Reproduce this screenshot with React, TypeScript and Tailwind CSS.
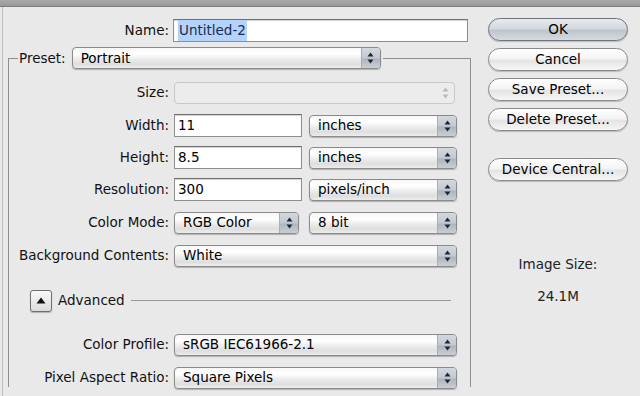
import React from "react";

const font = "font-['Lucida_Grande','DejaVu_Sans',sans-serif]";

function Arrows({ dim }: { dim?: boolean }) {
  const c = dim ? "#b9b9b9" : "#1e2633";
  return (
    <svg width="7" height="12" viewBox="0 0 7 12">
      <polygon points="3.5,0.5 6.5,4.5 0.5,4.5" fill={c} />
      <polygon points="0.5,7.5 6.5,7.5 3.5,11.5" fill={c} />
    </svg>
  );
}

function Select({
  value,
  className,
  disabled,
}: {
  value: string;
  className: string;
  disabled?: boolean;
}) {
  if (disabled) {
    return (
      <div
        className={`flex h-[22px] items-stretch rounded-[4px] border border-[#c9c9c9] bg-[#ececec] ${className}`}
      >
        <div className="flex-1" />
        <div className="flex w-[18px] items-center justify-center">
          <Arrows dim />
        </div>
      </div>
    );
  }
  return (
    <div
      className={`flex h-[22px] items-stretch overflow-hidden rounded-[4px] border border-[#8b8b8b] bg-[linear-gradient(to_bottom,#f7f7f7_0%,#ffffff_30%,#ececec_55%,#dedede_80%,#ededed_100%)] shadow-[0_1px_1px_rgba(0,0,0,0.25)] ${className}`}
    >
      <div className="flex flex-1 items-center pl-[8px] text-[13.5px] text-black">{value}</div>
      <div className="flex w-[19px] items-center justify-center border-l border-[#a9adb5] bg-[linear-gradient(to_bottom,#d3d8df_0%,#c3c9d2_50%,#aeb5c0_55%,#c9ced6_100%)]">
        <Arrows />
      </div>
    </div>
  );
}

function TextInput({ value, className }: { value: string; className: string }) {
  return (
    <div
      className={`flex h-[23px] items-center border border-[#8f8f8f] border-t-[#6f6f6f] bg-white pl-[3px] text-[13.5px] text-black shadow-[inset_0_1px_1px_rgba(0,0,0,0.18)] ${className}`}
    >
      {value}
    </div>
  );
}

function PillButton({ label, primary }: { label: string; primary?: boolean }) {
  return (
    <div
      className={`flex h-[23px] w-[140px] items-center justify-center rounded-full border text-[13.5px] text-black shadow-[0_1px_1px_rgba(0,0,0,0.2)] ${
        primary
          ? "border-[#6f747c] bg-[linear-gradient(to_bottom,#e7eaee_0%,#d4d9df_45%,#bfc5cd_55%,#d6dbe1_100%)]"
          : "border-[#8a8a8a] bg-[linear-gradient(to_bottom,#ffffff_0%,#f4f4f4_45%,#e4e4e4_55%,#f6f6f6_100%)]"
      }`}
    >
      {label}
    </div>
  );
}

function Row({
  label,
  className,
  children,
}: {
  label: string;
  className: string;
  children: React.ReactNode;
}) {
  return (
    <div className={`flex h-[23px] items-center ${className}`}>
      <div className="w-[164px] pr-[4px] text-right text-[13.5px] text-[#111]">{label}</div>
      <div className="ml-[1px] flex items-center gap-[7px]">{children}</div>
    </div>
  );
}

export default function App() {
  return (
    <div className={`h-[396px] w-[640px] overflow-hidden bg-[#e9e9e9] ${font}`}>
      {/* title bar strip */}
      <div className="h-[7px] border-b border-[#7d7d7d] bg-[linear-gradient(to_bottom,#a9a9a9,#999999)]" />

      <div className="ml-[2px] flex h-[389px] border-l border-[#bdbdbd]">
        {/* left column */}
        <div className="w-[478px] shrink-0">
          <div className="mt-[12px] flex h-[23px] items-center">
            <div className="w-[170px] pr-[4px] text-right text-[13.5px] text-[#111]">Name:</div>
            <TextInput className="w-[295px]" value="" />
          </div>
          {/* selected name text on the input */}
          <div className="-mt-[23px] ml-[175px] flex h-[23px] items-center">
            <span className="bg-[#b4d3fa] px-[1px] text-[13.5px] text-[#1b2a55]">Untitled-2</span>
          </div>

          <fieldset className="mt-[5px] ml-[5px] h-[340px] w-[463px] border border-b-0 border-[#8e8e8e]">
            <legend className="ml-[9px] flex items-center gap-[6px] pr-[2px]">
              <span className="pl-[1px] text-[13.5px] text-[#111]">Preset:</span>
              <Select value="Portrait" className="w-[309px]" />
            </legend>

            <Row label="Size:" className="mt-[12px] text-[#8a8a8a]">
              <Select value="" disabled className="w-[281px]" />
            </Row>
            <Row label="Width:" className="mt-[10px]">
              <TextInput value="11" className="w-[128px]" />
              <Select value="inches" className="w-[148px]" />
            </Row>
            <Row label="Height:" className="mt-[9px]">
              <TextInput value="8.5" className="w-[128px]" />
              <Select value="inches" className="w-[148px]" />
            </Row>
            <Row label="Resolution:" className="mt-[9px]">
              <TextInput value="300" className="w-[128px]" />
              <Select value="pixels/inch" className="w-[148px]" />
            </Row>
            <Row label="Color Mode:" className="mt-[10px]">
              <Select value="RGB Color" className="w-[125px]" />
              <div className="ml-[3px]">
                <Select value="8 bit" className="w-[148px]" />
              </div>
            </Row>
            <Row label="Background Contents:" className="mt-[10px]">
              <Select value="White" className="w-[283px]" />
            </Row>

            <div className="mt-[22px] flex h-[23px] items-center pl-[21px]">
              <div className="flex h-[22px] w-[22px] items-center justify-center rounded-[3px] border border-[#6e6e6e] bg-[linear-gradient(to_bottom,#fafafa,#dcdcdc)] shadow-[0_1px_1px_rgba(0,0,0,0.25)]">
                <svg width="10" height="7" viewBox="0 0 10 7">
                  <polygon points="5,0.5 9.5,6.5 0.5,6.5" fill="#111" />
                </svg>
              </div>
              <span className="ml-[6px] text-[13.5px] text-[#111]">Advanced</span>
              <div className="ml-[6px] h-px w-[320px] bg-[#9a9a9a]" />
            </div>

            <Row label="Color Profile:" className="mt-[21px]">
              <Select value="sRGB IEC61966-2.1" className="w-[283px]" />
            </Row>
            <Row label="Pixel Aspect Ratio:" className="mt-[10px]">
              <Select value="Square Pixels" className="w-[283px]" />
            </Row>
          </fieldset>
        </div>

        {/* right column */}
        <div className="ml-[7px] flex w-[140px] flex-col">
          <div className="mt-[11px] flex flex-col gap-[7px]">
            <PillButton label="OK" primary />
            <PillButton label="Cancel" />
            <PillButton label="Save Preset..." />
            <PillButton label="Delete Preset..." />
          </div>
          <div className="mt-[27px]">
            <PillButton label="Device Central..." />
          </div>
          <div className="mt-[73px] flex flex-col items-center gap-[12px] text-[13.5px] text-[#222]">
            <span>Image Size:</span>
            <span>24.1M</span>
          </div>
        </div>
      </div>
    </div>
  );
}
